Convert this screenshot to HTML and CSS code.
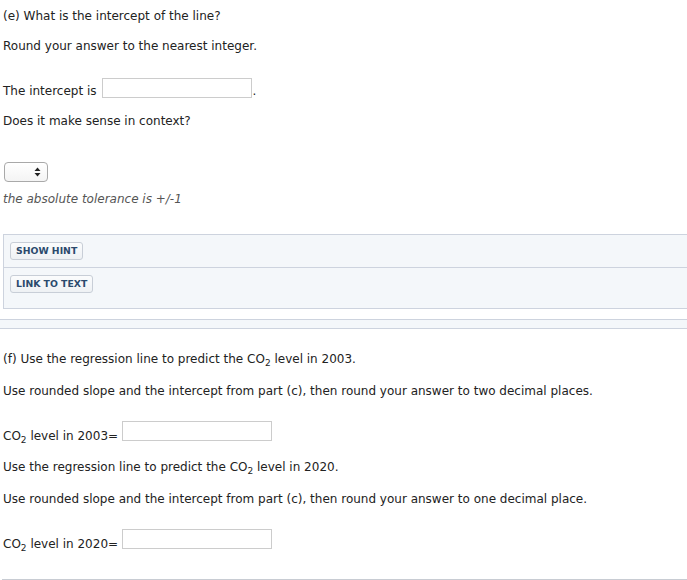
FILE: index.html
```html
<!DOCTYPE html>
<html>
<head>
<meta charset="utf-8">
<link rel="stylesheet" href="styles.css">
</head>
<body>
<div class="part">
  <p class="line l1">(e) What is the intercept of the line?</p>
  <p class="line l2">Round your answer to the nearest integer.</p>
  <div class="answer a-e"><span class="label">The intercept is</span><span class="field w150 gap"></span><span class="label">.</span></div>
  <p class="line l4">Does it make sense in context?</p>
  <div class="select-row">
    <span class="select">
      <svg class="arrows" width="7" height="10" viewBox="0 0 7 10"><path d="M3.5 0.5 L6.5 4 L0.5 4 Z M0.5 6 L6.5 6 L3.5 9.5 Z" fill="#222"/></svg>
    </span>
  </div>
  <p class="tolerance">the absolute tolerance is +/-1</p>
  <div class="panel">
    <div class="panel-row first"><span class="btn">SHOW HINT</span></div>
    <div class="panel-row last"><span class="btn">LINK TO TEXT</span></div>
  </div>
</div>
<div class="strip"></div>
<div class="part">
  <p class="line f1">(f) Use the regression line to predict the CO<sub>2</sub> level in 2003.</p>
  <p class="line f2">Use rounded slope and the intercept from part (c), then round your answer to two decimal places.</p>
  <div class="answer a-f"><span class="label">CO<sub>2</sub> level in 2003=</span><span class="field w150"></span></div>
  <p class="line f4">Use the regression line to predict the CO<sub>2</sub> level in 2020.</p>
  <p class="line f5">Use rounded slope and the intercept from part (c), then round your answer to one decimal place.</p>
  <div class="answer a-f a-f2"><span class="label">CO<sub>2</sub> level in 2020=</span><span class="field w150"></span></div>
</div>
<div class="bottom-rule"></div>
</body>
</html>
```
FILE: styles.css
```css
html, body {
  margin: 0;
  padding: 0;
  background: #ffffff;
}
body {
  font-family: "DejaVu Sans", Verdana, sans-serif;
  font-size: 12px;
  color: #222222;
  width: 687px;
  overflow: hidden;
}
p { margin: 0; }
.part {
  padding-left: 3px;
}
.line {
  line-height: 16px;
  white-space: nowrap;
}
.l1 { padding-top: 8px; }
.l2 { margin-top: 14px; }
.answer {
  display: flex;
  align-items: center;
  white-space: nowrap;
}
.label { line-height: 16px; }
.a-e { margin-top: 24px; }
.a-e .field { margin-bottom: 6px; }
.gap { margin-left: 5px; margin-right: 1px; }
.a-f { margin-top: 22px; }
.a-f .field { margin-bottom: 10px; margin-left: 4px; }
.l4 { margin-top: 9px; }
.field {
  display: inline-block;
  height: 18px;
  border: 1px solid #cccccc;
  background: #fff;
}
.w150 { width: 148px; }
.select-row { margin-top: 33px; padding-left: 1px; height: 20px; }
.select {
  display: inline-flex;
  justify-content: flex-end;
  align-items: center;
  width: 42px;
  height: 18px;
  border: 1px solid #a9a9a9;
  border-radius: 4px;
  background: linear-gradient(#ffffff, #f4f4f4);
}
.arrows { margin-right: 6px; }
.tolerance {
  margin-top: 9px;
  line-height: 16px;
  font-style: italic;
  color: #555555;
}
.panel {
  margin-top: 27px;
  background: #f4f7fa;
  border-top: 1px solid #cdd3de;
  border-left: 1px solid #cdd3de;
  border-bottom: 1px solid #cdd3de;
}
.panel-row {
  padding-left: 6px;
  padding-top: 7px;
  box-sizing: border-box;
}
.panel-row.first {
  height: 33px;
  border-bottom: 1px solid #cdd3de;
}
.panel-row.last {
  height: 40px;
}
.btn {
  display: inline-block;
  font-family: "DejaVu Sans", Verdana, sans-serif;
  font-size: 9.3px;
  font-weight: bold;
  color: #2b4a6d;
  line-height: 16px;
  padding: 0 5px;
  border: 1px solid #c8ced7;
  border-radius: 3px;
  background: linear-gradient(#fbfcfd, #eef1f4);
}
.strip {
  margin-top: 10px;
  height: 8px;
  background: #f4f7fa;
  border-top: 1px solid #cdd3de;
  border-bottom: 1px solid #cdd3de;
}
sub {
  font-size: 9px;
  vertical-align: -3px;
  line-height: 0;
}
.f1 { margin-top: 22px; }
.f2 { margin-top: 16px; }
.f4 { margin-top: 8px; }
.f5 { margin-top: 16px; }
.a-f2 { margin-top: 22px; }
.bottom-rule {
  margin-top: 20px;
  margin-left: 2px;
  height: 1px;
  background: #c8ccd3;
}
```
